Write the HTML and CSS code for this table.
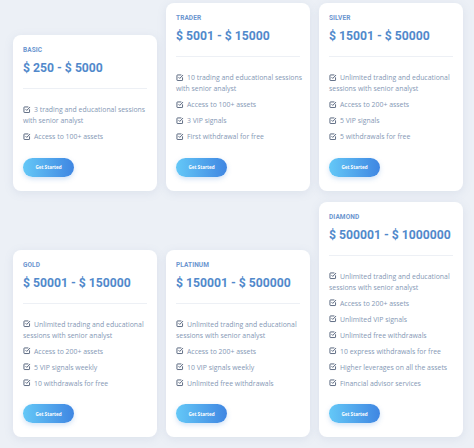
FILE: index.html
```html
<!DOCTYPE html>
<html lang="en">
<head>
<meta charset="utf-8">
<title>Plans</title>
<link rel="stylesheet" href="styles.css">
</head>
<body>
<svg width="0" height="0" class="defs" aria-hidden="true">
  <symbol id="chk" viewBox="0 0 24 24">
    <polyline points="9 11 12 14 22 4" fill="none" stroke="currentColor" stroke-width="2.8" stroke-linecap="round" stroke-linejoin="round"/>
    <path d="M21 12v7a2 2 0 0 1-2 2H5a2 2 0 0 1-2-2V5a2 2 0 0 1 2-2h11" fill="none" stroke="currentColor" stroke-width="2.8" stroke-linecap="round" stroke-linejoin="round"/>
  </symbol>
</svg>
<main class="grid">
  <section class="card">
    <h3 class="label">BASIC</h3>
    <div class="price">$ 250 - $ 5000</div>
    <hr class="divider">
    <ul class="features">
      <li><svg class="ic"><use href="#chk"/></svg>3 trading and educational sessions with senior analyst</li>
      <li><svg class="ic"><use href="#chk"/></svg>Access to 100+ assets</li>
    </ul>
    <button class="btn">Get Started</button>
  </section>
  <section class="card">
    <h3 class="label">TRADER</h3>
    <div class="price">$ 5001 - $ 15000</div>
    <hr class="divider">
    <ul class="features">
      <li><svg class="ic"><use href="#chk"/></svg>10 trading and educational sessions with senior analyst</li>
      <li><svg class="ic"><use href="#chk"/></svg>Access to 100+ assets</li>
      <li><svg class="ic"><use href="#chk"/></svg>3 VIP signals</li>
      <li><svg class="ic"><use href="#chk"/></svg>First withdrawal for free</li>
    </ul>
    <button class="btn">Get Started</button>
  </section>
  <section class="card">
    <h3 class="label">SILVER</h3>
    <div class="price">$ 15001 - $ 50000</div>
    <hr class="divider">
    <ul class="features">
      <li><svg class="ic"><use href="#chk"/></svg>Unlimited trading and educational sessions with senior analyst</li>
      <li><svg class="ic"><use href="#chk"/></svg>Access to 200+ assets</li>
      <li><svg class="ic"><use href="#chk"/></svg>5 VIP signals</li>
      <li><svg class="ic"><use href="#chk"/></svg>5 withdrawals for free</li>
    </ul>
    <button class="btn">Get Started</button>
  </section>
  <section class="card">
    <h3 class="label">GOLD</h3>
    <div class="price">$ 50001 - $ 150000</div>
    <hr class="divider">
    <ul class="features">
      <li><svg class="ic"><use href="#chk"/></svg>Unlimited trading and educational sessions with senior analyst</li>
      <li><svg class="ic"><use href="#chk"/></svg>Access to 200+ assets</li>
      <li><svg class="ic"><use href="#chk"/></svg>5 VIP signals weekly</li>
      <li><svg class="ic"><use href="#chk"/></svg>10 withdrawals for free</li>
    </ul>
    <button class="btn">Get Started</button>
  </section>
  <section class="card">
    <h3 class="label">PLATINUM</h3>
    <div class="price">$ 150001 - $ 500000</div>
    <hr class="divider">
    <ul class="features">
      <li><svg class="ic"><use href="#chk"/></svg>Unlimited trading and educational sessions with senior analyst</li>
      <li><svg class="ic"><use href="#chk"/></svg>Access to 200+ assets</li>
      <li><svg class="ic"><use href="#chk"/></svg>10 VIP signals weekly</li>
      <li><svg class="ic"><use href="#chk"/></svg>Unlimited free withdrawals</li>
    </ul>
    <button class="btn">Get Started</button>
  </section>
  <section class="card">
    <h3 class="label">DIAMOND</h3>
    <div class="price">$ 500001 - $ 1000000</div>
    <hr class="divider">
    <ul class="features">
      <li><svg class="ic"><use href="#chk"/></svg>Unlimited trading and educational sessions with senior analyst</li>
      <li><svg class="ic"><use href="#chk"/></svg>Access to 200+ assets</li>
      <li><svg class="ic"><use href="#chk"/></svg>Unlimited VIP signals</li>
      <li><svg class="ic"><use href="#chk"/></svg>Unlimited free withdrawals</li>
      <li><svg class="ic"><use href="#chk"/></svg>10 express withdrawals for free</li>
      <li><svg class="ic"><use href="#chk"/></svg>Higher leverages on all the assets</li>
      <li><svg class="ic"><use href="#chk"/></svg>Financial advisor services</li>
    </ul>
    <button class="btn">Get Started</button>
  </section>
</main>
</body>
</html>
```

FILE: styles.css
```css
* { box-sizing: border-box; }
html, body {
  margin: 0;
  padding: 0;
  background: #ecf0f6;
  height: 100%;
}
body {
  font-family: "Open Sans", "Noto Sans", sans-serif;
  overflow: hidden;
}
.defs { position: absolute; width: 0; height: 0; }
.grid {
  display: grid;
  grid-template-columns: 144px 144px 144px;
  column-gap: 9px;
  row-gap: 11px;
  align-items: end;
  padding: 3px 0 0 13px;
}
.card {
  background: #ffffff;
  border-radius: 8px;
  box-shadow: 0 2px 10px rgba(110, 130, 170, 0.13);
  padding: 12px 6px 14px 10px;
  display: flex;
  flex-direction: column;
  align-items: flex-start;
}
.label {
  margin: 0;
  font-family: Roboto, "Noto Sans", sans-serif;
  font-weight: 700;
  font-size: 6.5px;
  line-height: 7px;
  color: #6b95cf;
  letter-spacing: 0.1px;
}
.price {
  margin-top: 7px;
  font-family: Roboto, "Noto Sans", sans-serif;
  font-weight: 700;
  font-size: 12.2px;
  line-height: 14px;
  color: #5189cb;
  white-space: nowrap;
}
.divider {
  align-self: stretch;
  margin: 13px 4px 0 0;
  border: 0;
  height: 1px;
  background: #edf0f5;
}
.features {
  list-style: none;
  margin: 15px 0 0 0;
  padding: 0;
  display: flex;
  flex-direction: column;
  gap: 5px;
  font-size: 6.9px;
  line-height: 11px;
  color: #8598b5;
}
.ic {
  width: 7.5px;
  height: 7.5px;
  color: #44546f;
  margin-right: 3.5px;
  vertical-align: -1px;
}
.btn {
  margin-top: 15.5px;
  width: 51px;
  height: 19px;
  border: 0;
  border-radius: 10px;
  background: linear-gradient(90deg, #64c8f7 0%, #3f86e2 100%);
  box-shadow: 0 2px 5px rgba(70, 140, 220, 0.25);
  color: #ffffff;
  font-family: "Open Sans", "Noto Sans", sans-serif;
  font-weight: 700;
  font-size: 4.6px;
  padding: 0;
  cursor: pointer;
}
```
